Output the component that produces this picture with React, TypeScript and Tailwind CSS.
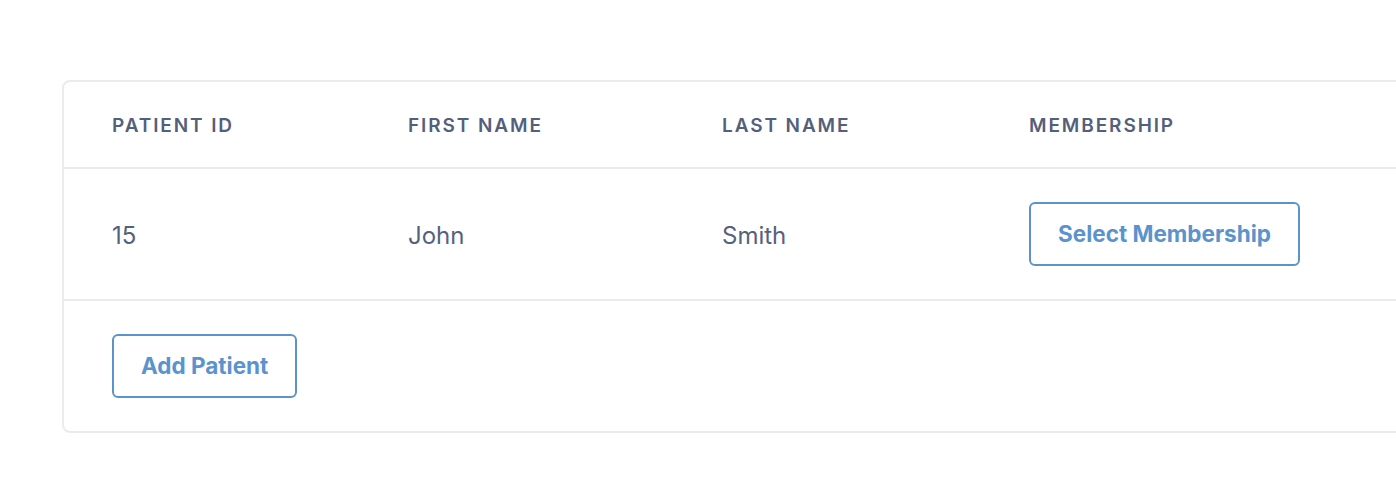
const columns = ["Patient ID", "First Name", "Last Name", "Membership"]

const patients = [{ id: 15, firstName: "John", lastName: "Smith" }]

const gridCols = "grid grid-cols-[296px_314px_307px_1fr]"

function OutlineButton({ children }: { children: React.ReactNode }) {
  return (
    <button className="h-[64px] rounded-[6px] border-2 border-[#5b93cc] bg-white px-[27px] text-[22.5px] font-bold text-[#5b93cc]">
      {children}
    </button>
  )
}

export default function App() {
  return (
    <div
      className="min-h-screen w-full overflow-hidden bg-white pl-[62px] pt-[80px]"
      style={{ fontFamily: "Inter, 'Noto Sans', sans-serif" }}
    >
      <div className="w-[1420px] rounded-[8px] border-2 border-[#ebebee]">
        {/* Header */}
        <div className={`${gridCols} h-[87px] items-center border-b-2 border-[#ebebee] pl-[48px] pt-[3px]`}>
          {columns.map((col) => (
            <div
              key={col}
              className="text-[19px] font-semibold uppercase tracking-[0.1em] text-[#545f7b]"
            >
              {col}
            </div>
          ))}
        </div>

        {/* Rows */}
        {patients.map((p) => (
          <div
            key={p.id}
            className={`${gridCols} h-[132px] items-center border-b-2 border-[#ebebee] pl-[48px] text-[24px] text-[#56617d]`}
          >
            <div className="pt-[3px]">{p.id}</div>
            <div className="pt-[3px]">{p.firstName}</div>
            <div className="pt-[3px]">{p.lastName}</div>
            <div>
              <OutlineButton>Select Membership</OutlineButton>
            </div>
          </div>
        ))}

        {/* Footer */}
        <div className="flex h-[130px] items-center pl-[48px]">
          <OutlineButton>Add Patient</OutlineButton>
        </div>
      </div>
    </div>
  )
}
